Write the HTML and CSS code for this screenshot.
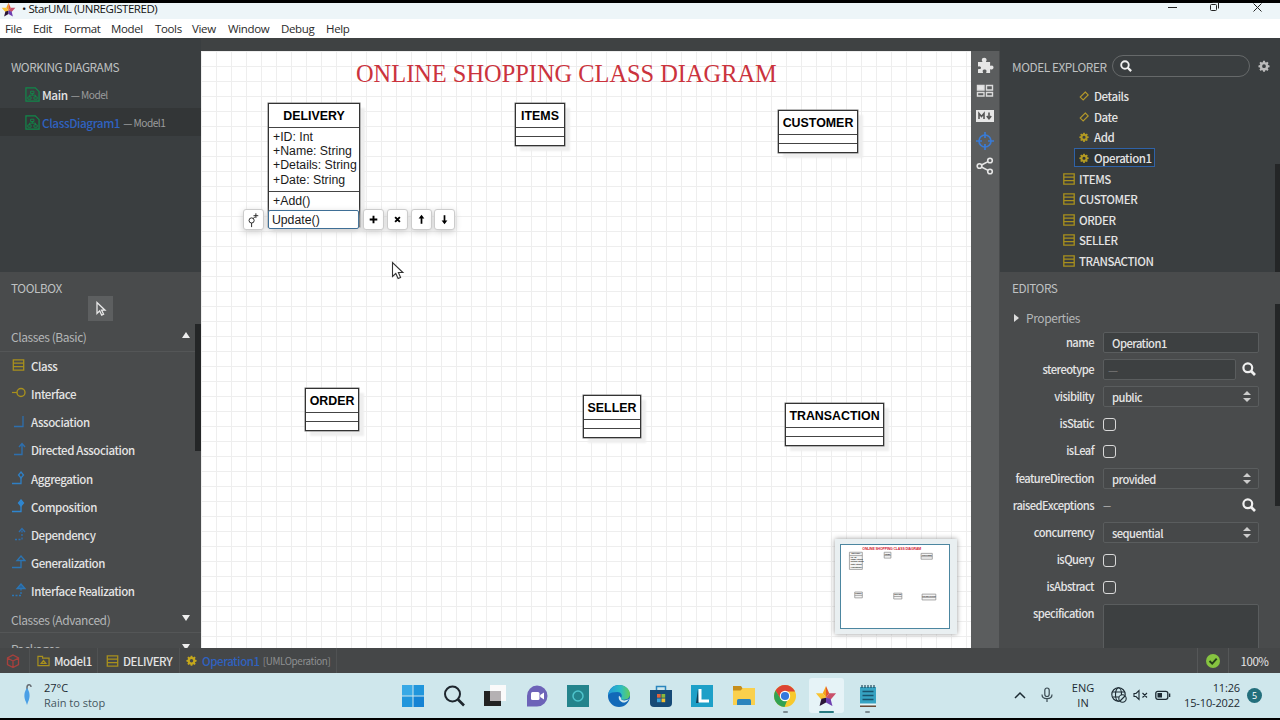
FILE: index.html
```
<!DOCTYPE html>
<html lang="en">
<head>
    <meta charset="UTF-8">
    <meta name="viewport" content="width=device-width, initial-scale=1.0">
    <title>StarUML (UNREGISTERED)</title>
    <link rel="stylesheet" href="styles.css">
</head>
<body>
    <!-- shared icons -->
    <svg class="defs" width="0" height="0">
        <symbol id="i-star" viewBox="0 0 24 24">
            <path fill="#f6a21c" d="M12 1 8.500 9 12 14z"/>
            <path fill="#e2572b" d="M12 1l3.500 8-3.500 5z"/>
            <path fill="#f9c331" d="M1 9h7.500l3.500 5-5 2z"/>
            <path fill="#c9506a" d="M23 9h-7.500L12 14l5 2z"/>
            <path fill="#2a1638" d="M5 23l2-8 5-1v5z"/>
            <path fill="#6d3fb0" d="M19 23l-2-8-5-1v5z"/>
        </symbol>
        <symbol id="i-diagram" viewBox="0 0 16 16">
            <path d="M1 1h10l4 4v10H1z" fill="none" stroke="#11884a" stroke-width="1.3"/>
            <path d="M6 4.500h3.500V7H6zM3 10.500h3.500V13H3zM9.500 10.500H13V13H9.500zM7.800 7v1.700M4.700 10.500V8.700h6.500v1.800" fill="none" stroke="#11884a"/>
        </symbol>
        <symbol id="i-class" viewBox="0 0 12 12">
            <path d="M.8.8h10.400v10.400H.8zM.8 4.200h10.400M.8 7.700h10.400" fill="none" stroke="#a8901d" stroke-width="1.3"/>
        </symbol>
        <symbol id="i-attr" viewBox="0 0 12 12">
            <path d="M7.500 1.200 11 4.700 5 10.800 1.500 7.300z" fill="none" stroke="#b3982a" stroke-width="1.4"/>
        </symbol>
        <symbol id="i-cog" viewBox="0 0 16 16">
            <path fill="currentColor" fill-rule="evenodd" d="M6.800 1h2.400l.4 1.900 1.200.5L12.400 2.300l1.700 1.700-1.100 1.600.5 1.200 1.900.4v2.400l-1.900.4-.5 1.200 1.100 1.600-1.700 1.700-1.600-1.100-1.200.5-.4 1.900H6.800l-.4-1.900-1.200-.5-1.600 1.100-1.700-1.700L3 11.200 2.500 10 .6 9.600V7.200l1.900-.4L3 5.600 1.900 4l1.700-1.700 1.600 1.100 1.200-.5zM8 5.800a2.500 2.500 0 1 0 0 5 2.500 2.500 0 0 0 0-5z"/>
        </symbol>
        <symbol id="i-search" viewBox="0 0 14 14">
            <circle cx="5.800" cy="5.800" r="4.400" fill="none" stroke="currentColor" stroke-width="2.200"/>
            <path d="M8.800 8.800 13 13" stroke="currentColor" stroke-width="2.700"/>
        </symbol>
        <symbol id="i-line" viewBox="0 0 14 14">
            <path d="M2 12.500h9V2" fill="none" stroke="#2d6fae" stroke-width="1.3"/>
        </symbol>
        <symbol id="i-dline" viewBox="0 0 14 14">
            <path d="M2 12.500h8V2M7 5l3-3.500L13 5" fill="none" stroke="#2d6fae" stroke-width="1.4"/>
        </symbol>
    </svg>

    <header class="titlebar">
        <svg class="logo"><use href="#i-star"/></svg>
        <span class="title">• StarUML (UNREGISTERED)</span>
        <svg class="win-btns" width="96" height="14" viewBox="0 0 96 14" fill="none" stroke="#222">
            <path d="M0 6.500h9M85.500 2.500l8 8M93.500 2.500l-8 8"/>
            <rect x="42.500" y="3.500" width="6" height="6" rx="1"/>
            <path d="M44.500 1.500h6v6"/>
        </svg>
    </header>

    <nav class="menu">
        <span class="m1">File</span><span class="m2">Edit</span><span class="m3">Format</span><span class="m4">Model</span><span class="m5">Tools</span><span class="m6">View</span><span class="m7">Window</span><span class="m8">Debug</span><span>Help</span>
    </nav>

    <main class="app">
        <aside class="left">
            <section class="working">
                <h2>WORKING DIAGRAMS</h2>
                <div class="diagram"><svg><use href="#i-diagram"/></svg><b>Main</b><small>— Model</small></div>
                <div class="diagram active"><svg><use href="#i-diagram"/></svg><b>ClassDiagram1</b><small>— Model1</small></div>
            </section>
            <section class="toolbox">
                <h2>TOOLBOX</h2>
                <div class="select-tool">
                    <svg width="12" height="16" viewBox="0 0 12 16"><path d="M2 1.500v11l2.700-2.600 2 4.300 1.900-.9-2-4.100H10z" fill="none" stroke="#e8e8e8" stroke-width="1.3"/></svg>
                </div>
                <div class="group"><span>Classes (Basic)</span><i class="up"></i></div>
                <ul class="tools">
                    <li><svg class="sq"><use href="#i-class"/></svg>Class</li>
                    <li><svg viewBox="0 0 14 14"><path d="M0 6.500h5" stroke="#a8901d" stroke-width="1.200"/><circle cx="9" cy="6.500" r="4" fill="none" stroke="#a8901d" stroke-width="1.400"/></svg>Interface</li>
                    <li><svg><use href="#i-line"/></svg>Association</li>
                    <li><svg><use href="#i-dline"/></svg>Directed Association</li>
                    <li><svg viewBox="0 0 14 14" fill="none" stroke="#2f7fc4" stroke-width="1.300"><path d="M0 12.500h9V7"/><path d="M9 1l2.500 3L9 7 6.500 4z"/></svg>Aggregation</li>
                    <li><svg viewBox="0 0 14 14" fill="none" stroke="#2f86d0" stroke-width="1.300"><path d="M0 12.500h9V7"/><path d="M9 1l2.500 3L9 7 6.500 4z" fill="#2f86d0"/></svg>Composition</li>
                    <li><svg viewBox="0 0 14 14" fill="none" stroke="#2d6fae" stroke-width="1.300"><path d="M3 12.500h7V2" stroke-dasharray="2 1.500"/><path d="M7 5l3-3.500L13 5"/></svg>Dependency</li>
                    <li><svg viewBox="0 0 14 14" fill="none" stroke="#2b75b4" stroke-width="1.300"><path d="M0 12.500h9V5.500"/><path d="M5 5.500h8L9 1z"/></svg>Generalization</li>
                    <li><svg viewBox="0 0 14 14" fill="none" stroke="#2b75b4" stroke-width="1.300"><path d="M0 12.500h9V5.500" stroke-dasharray="2 1.500"/><path d="M5 5.500h8L9 1z" fill="#2b6296"/></svg>Interface Realization</li>
                </ul>
                <div class="group bottom"><span>Classes (Advanced)</span><i class="down"></i></div>
                <div class="group cut"><span>Packages</span><i class="down"></i></div>
                <div class="scroll"></div>
            </section>
        </aside>

        <section class="canvas">
            <div class="heading">ONLINE SHOPPING CLASS DIAGRAM</div>

            <div class="uml delivery">
                <div class="name">DELIVERY</div>
                <div class="attrs">+ID: Int<br>+Name: String<br>+Details: String<br>+Date: String</div>
                <div class="ops">+Add()</div>
            </div>
            <div class="uml items"><div class="name">ITEMS</div><div class="row"></div><div class="row"></div></div>
            <div class="uml customer"><div class="name">CUSTOMER</div><div class="row"></div><div class="row"></div></div>
            <div class="uml order"><div class="name">ORDER</div><div class="row"></div><div class="row"></div></div>
            <div class="uml seller"><div class="name">SELLER</div><div class="row"></div><div class="row"></div></div>
            <div class="uml transaction"><div class="name">TRANSACTION</div><div class="row"></div><div class="row"></div></div>

            <div class="quickedit">
                <button class="qbtn"><svg viewBox="0 0 20 20" fill="none" stroke="#222"><circle cx="8" cy="11" r="2.700"/><path d="M8 13.700V18M12.500 3.500v5M10 6h5M9.800 9l1.500-1.800"/></svg></button>
                <span class="field">Update()</span>
                <button class="qbtn"><svg viewBox="0 0 20 20"><path d="M10 6v8M6 10h8" stroke="#000" stroke-width="2"/></svg></button>
                <button class="qbtn"><svg viewBox="0 0 20 20"><path d="M7.500 7.500l5 5M12.500 7.500l-5 5" stroke="#000" stroke-width="2"/></svg></button>
                <button class="qbtn"><svg viewBox="0 0 20 20"><path d="M10 7v7.500" stroke="#000" stroke-width="1.800"/><path d="M10 5l3 4H7z"/></svg></button>
                <button class="qbtn"><svg viewBox="0 0 20 20"><path d="M10 5.500V13" stroke="#000" stroke-width="1.800"/><path d="M10 15l3-4H7z"/></svg></button>
            </div>

            <svg class="pointer" width="14" height="20" viewBox="0 0 14 20"><path d="M1.500 1.500v14l3.300-3 2.300 5 2.500-1.100-2.200-4.900h4.500z" fill="#fff" stroke="#333" stroke-width="1.100"/></svg>

            <div class="minimap">
                <svg viewBox="0 0 770 595" preserveAspectRatio="none">
                    <text x="362" y="33" text-anchor="middle" textLength="420" font-family="Liberation Sans" font-size="25" font-weight="bold" fill="#d02030">ONLINE SHOPPING CLASS DIAGRAM</text>
                    <g fill="#f4f4f4" stroke="#888" stroke-width="5">
                        <path d="M60 52h92v123H60zM60 76h92M308 52h48v42h-48zM308 76h48M571 60h80v42h-80zM571 84h80M98 337h54v42H98zM98 361h54M376 345h58v42h-58zM376 369h58M578 352h98v42h-98zM578 376h98"/>
                    </g>
                    <g font-family="Liberation Sans" font-size="13" font-weight="bold" fill="#111">
                        <text x="75" y="68">DELIVERY</text>
                        <text x="66" y="92">+ID: Int</text>
                        <text x="66" y="108">+Name: String</text>
                        <text x="66" y="124">+Details: String</text>
                        <text x="66" y="140">+Date: String</text>
                        <text x="66" y="168">+Operation1()</text>
                        <text x="312" y="70">ITEMS</text>
                        <text x="575" y="77">CUSTOMER</text>
                        <text x="100" y="354">ORDER</text>
                        <text x="380" y="362">SELLER</text>
                        <text x="580" y="370">TRANSACTION</text>
                    </g>
                </svg>
            </div>
        </section>

        <div class="strip">
            <svg viewBox="0 0 18 18"><path fill="#e6e6e6" d="M2 5h4.300c.5-.5-.5-1.200-.5-2.100C5.800 1.600 6.800.8 8.200.8s2.400.8 2.400 2.100c0 .9-1 1.600-.5 2.100h4v3.600c.5.600 1 0 1.700 0 1 0 1.700.8 1.700 1.900s-.7 1.900-1.700 1.900c-.7 0-1.200-.6-1.700 0V16h-3.700c-.6-.6.2-1.100.2-1.900 0-.9-.9-1.600-2-1.600s-2 .7-2 1.600c0 .8.800 1.300.2 1.900H2v-3.600c.5-.6 3 .300 3-1.600S2.500 9.500 2 8.900z"/></svg>
            <svg viewBox="0 0 18 18" fill="none" stroke="#dcdcdc" stroke-width="1.400"><path d="M1.500 3.500h6.500v4.500H1.500z" fill="#e6e6e6"/><path d="M10.500 3.500h6v4.500h-6zM1.500 10.500H8V14H1.500zM10.500 10.500h6V14h-6z"/></svg>
            <svg viewBox="0 0 18 18"><path fill="#e6e6e6" d="M0 3h18v12H0z"/><path d="M3 12V6.500l2.500 3 2.500-3V12M13 5.500v5.500M10.800 9l2.200 2.700L15.200 9" fill="none" stroke="#555" stroke-width="1.600"/></svg>
            <svg viewBox="0 0 18 18" fill="none" stroke="#3a7bd5" stroke-width="1.700"><circle cx="9" cy="9" r="6"/><path d="M9 0v6M9 12v6M0 9h6M12 9h6"/></svg>
            <svg viewBox="0 0 18 18" fill="none" stroke="#e6e6e6" stroke-width="1.600"><circle cx="3.500" cy="9" r="2.300"/><circle cx="14" cy="3.500" r="2.300"/><circle cx="14" cy="14.500" r="2.300"/><path d="M5.500 8 12 4.600M5.500 10l6.500 3.400"/></svg>
        </div>

        <aside class="right">
            <section class="explorer">
                <div class="exp-head">
                    <h2>MODEL EXPLORER</h2>
                    <div class="searchbox"><svg><use href="#i-search"/></svg></div>
                    <svg class="cog"><use href="#i-cog"/></svg>
                </div>
                <ul class="tree">
                    <li class="leaf"><span><svg><use href="#i-attr"/></svg>Details</span></li>
                    <li class="leaf"><span><svg><use href="#i-attr"/></svg>Date</span></li>
                    <li class="leaf"><span><svg><use href="#i-cog"/></svg>Add</span></li>
                    <li class="leaf"><span class="sel"><svg><use href="#i-cog"/></svg>Operation1</span></li>
                    <li><span><svg><use href="#i-class"/></svg>ITEMS</span></li>
                    <li><span><svg><use href="#i-class"/></svg>CUSTOMER</span></li>
                    <li><span><svg><use href="#i-class"/></svg>ORDER</span></li>
                    <li><span><svg><use href="#i-class"/></svg>SELLER</span></li>
                    <li><span><svg><use href="#i-class"/></svg>TRANSACTION</span></li>
                </ul>
                <div class="scroll"></div>
            </section>
            <section class="editors">
                <h2>EDITORS</h2>
                <div class="props"><i></i>Properties</div>
                <div class="prop"><label>name</label><div class="input">Operation1</div></div>
                <div class="prop"><label>stereotype</label><div class="input short">—</div><svg><use href="#i-search"/></svg></div>
                <div class="prop"><label>visibility</label><div class="input select">public</div></div>
                <div class="prop"><label>isStatic</label><div class="check"></div></div>
                <div class="prop"><label>isLeaf</label><div class="check"></div></div>
                <div class="prop"><label>featureDirection</label><div class="input select">provided</div></div>
                <div class="prop"><label>raisedExceptions</label><div class="none">—</div><svg><use href="#i-search"/></svg></div>
                <div class="prop"><label>concurrency</label><div class="input select">sequential</div></div>
                <div class="prop"><label>isQuery</label><div class="check"></div></div>
                <div class="prop"><label>isAbstract</label><div class="check"></div></div>
                <div class="prop spec"><label>specification</label><div class="input area"></div></div>
                <div class="scroll"></div>
            </section>
        </aside>
    </main>

    <footer class="status">
        <div class="crumb cube"><svg viewBox="0 0 14 14" fill="none" stroke="#a8403c" stroke-width="1.300"><path d="M7 1l5.500 3v6.500L7 13.500l-5.500-3V4zM1.500 4 7 7l5.500-3M7 7v6.500"/></svg></div>
        <div class="crumb model"><svg viewBox="0 0 14 12" fill="none" stroke="#a8901d" stroke-width="1.300"><path d="M1 11V1h5v2h7v8zM4.500 8.500h5L7 5.500z"/></svg>Model1</div>
        <div class="crumb del"><svg><use href="#i-class"/></svg>DELIVERY</div>
        <div class="crumb op"><svg><use href="#i-cog"/></svg><span>Operation1</span><small>[UMLOperation]</small></div>
        <div class="valid"><svg width="14" height="14" viewBox="0 0 14 14"><circle cx="7" cy="7" r="7" fill="#86c440"/><path d="M3.500 7l2.700 2.700 4.500-5" fill="none" stroke="#26401a" stroke-width="1.900"/></svg></div>
        <div class="zoom">100%</div>
    </footer>

    <footer class="taskbar">
        <div class="weather">
            <svg width="10" height="24" viewBox="0 0 10 24"><path d="M5 7V4.500C5 .8 9 .8 9 4" fill="none" stroke="#666c72" stroke-width="1.500"/><path d="M5 5c3 4 3.500 9 1 14l-1 3-1-3C1.500 14 2 9 5 5z" fill="#4a9fe6"/></svg>
            <div>27°C<br><span>Rain to stop</span></div>
        </div>
        <div class="apps">
            <div class="app-icon"><svg viewBox="0 0 22 22" fill="#1583d4"><path d="M0 0h10.500v10.500H0z" fill="#38a9e6"/><path d="M11.500 0H22v10.500H11.500zM0 11.500h10.500V22H0z" fill="#2196dc"/><path d="M11.500 11.500H22V22H11.500z"/></svg></div>
            <div class="app-icon"><svg viewBox="0 0 22 22" fill="none" stroke="#1e262e"><circle cx="9.500" cy="9" r="7.500" stroke-width="2"/><path d="M15 14.500l6 6" stroke-width="2.600"/></svg></div>
            <div class="app-icon"><svg viewBox="0 0 22 22"><path fill="#fafafa" d="M6 0h16v16H6z"/><path fill="#222" d="M0 6h17v15H0z"/><path fill="#b5b1b3" d="M6 6h11v10H6z"/></svg></div>
            <div class="app-icon"><svg viewBox="0 0 22 22"><path fill="#6d63b8" d="M11 .5a10.500 10.500 0 1 1 0 21H1V11A10.300 10.300 0 0 1 11 .5z"/><rect x="5" y="7" width="8.500" height="8" rx="1.500" fill="#fff"/><path d="M14.200 10 18 7.500v7L14.200 12z" fill="#fff"/></svg></div>
            <div class="app-icon"><svg viewBox="0 0 22 22"><path fill="#24848c" d="M0 0h22v22H0z"/><circle cx="11" cy="11" r="5" fill="none" stroke="#4fc4cc" stroke-width="1.500"/></svg></div>
            <div class="app-icon"><svg viewBox="0 0 22 22">
                <defs><linearGradient id="edge" x2="1"><stop offset="0" stop-color="#2399dc"/><stop offset=".6" stop-color="#2dbec0"/><stop offset="1" stop-color="#66cc55"/></linearGradient></defs>
                <circle cx="11" cy="11" r="11" fill="#1269b8"/><path fill="url(#edge)" d="M0 10C1 4 5.500 0 11 0c6.500 0 11 4.500 11 9 0 4-3 5.700-6 5.700-2 0-3.500-.7-3-1.800 2-2.500 0-6-3.500-6C5.500 6.900 2 7.500 0 10z"/><path fill="#d2e8ec" d="M13 12.900c-.5 1.500 1.500 2.700 3.800 2.500 2-.1 3.500-.8 4.500-1.800-1 2-2.500 3.300-4.300 3.900-4 .5-7.300-3-6-6.800.8.500 1.600 1.200 2 2.200z"/></svg></div>
            <div class="app-icon"><svg viewBox="0 0 22 22"><path d="M6.500 5V1.500h9V5" fill="none" stroke="#2b86bd" stroke-width="1.500"/><path fill="#174a76" d="M0 5h22v13a4 4 0 0 1-4 4H4a4 4 0 0 1-4-4z"/><path fill="#e2643c" d="M7 9h3.700v3.700H7z"/><path fill="#8ab83c" d="M11.500 9h3.700v3.700h-3.700z"/><path fill="#3aa0d6" d="M7 13.500h3.700v3.700H7z"/><path fill="#f0bd32" d="M11.500 13.500h3.700v3.700h-3.700z"/></svg></div>
            <div class="app-icon"><svg viewBox="0 0 22 22"><path fill="#1da0c8" d="M0 0h22v22H0z"/><path fill="#123c54" d="M7 4 5 18h3z"/><path fill="#fff" d="M7.500 4h3v10.500h7.500v3H7.500z"/></svg></div>
            <div class="app-icon"><svg viewBox="0 0 22 22"><path fill="#c78e1a" d="M0 1h8l2 3v4H0z"/><path fill="#fad04c" d="M0 5.500h7.500L10 3h12v17H0z"/><path fill="#2c84bd" d="M4 20v-4.500q0-1.500 1.500-1.500h11q1.500 0 1.500 1.500V20z"/></svg></div>
            <div class="app-icon run"><svg viewBox="0 0 22 22"><circle cx="11" cy="11" r="11" fill="#f8c92c"/><path fill="#dc4434" d="M1.500 5.500a11 11 0 0 1 19 0L21 6.500H11L6.200 13.500z"/><path fill="#32a252" d="M1.500 5.500 6.500 13.500l6.500 2.300L10.500 22A11 11 0 0 1 1.500 5.500z"/><circle cx="11" cy="11" r="5.200" fill="#fff"/><circle cx="11" cy="11" r="4.100" fill="#3478dc"/></svg></div>
            <div class="app-icon run current"><svg><use href="#i-star"/></svg></div>
            <div class="app-icon run"><svg viewBox="0 0 22 22"><path fill="#36a3c2" d="M3 2h16v18H3z"/><path d="M5 0v3M8 0v3M11 0v3M14 0v3M17 0v3" stroke="#234b5c" stroke-width="1.200"/><path d="M5.500 6.500h11M5.500 10.500h11M5.500 14.500h11" stroke="#18546e" stroke-width="1.300"/><path d="M3 18.500h16v1.500H3z" fill="#e8f4f6"/><path d="M3 20.500h16V22H3z" fill="#6b4a35"/></svg></div>
        </div>
        <div class="tray">
            <svg class="t-up" width="12" height="8" viewBox="0 0 12 8"><path d="M1 7l5-5 5 5" fill="none" stroke="#1d2b33" stroke-width="1.500"/></svg>
            <svg class="t-mic" width="12" height="16" viewBox="0 0 12 16" fill="none" stroke="#3a4a52" stroke-width="1.200"><rect x="3.800" y="1" width="4.400" height="8.500" rx="2.200"/><path d="M1 7.500c0 5.500 10 5.500 10 0M6 11.500V15"/></svg>
            <div class="lang">ENG<br>IN</div>
            <svg class="t-net" width="16" height="16" viewBox="0 0 16 16" fill="none" stroke="#1d2b33" stroke-width="1.100"><circle cx="7.500" cy="7.500" r="6.700"/><ellipse cx="7.500" cy="7.500" rx="3" ry="6.700"/><path d="M1.500 5h12M1.500 10h7"/><circle cx="11.500" cy="11.500" r="3.700" fill="#cde6ea"/><path d="M9 14l5-5"/></svg>
            <svg class="t-vol" width="15" height="12" viewBox="0 0 15 12" fill="none" stroke="#1d2b33" stroke-width="1.100"><path d="M1 4.500h2L6 1.500v9L3 7.500H1zM9.500 4l4.500 4.500M14 4 9.500 8.500"/></svg>
            <svg class="t-bat" width="16" height="11" viewBox="0 0 16 11"><rect x=".8" y="1.300" width="12" height="8" rx="2" fill="none" stroke="#1d2b33" stroke-width="1.300"/><path d="M2.500 3h4.500v4.600H2.500zM14 3.500h1.300v3.600H14z" fill="#1d2b33"/></svg>
            <div class="clock">11:26<br>15-10-2022</div>
            <div class="badge">5</div>
        </div>
    </footer>
</body>
</html>
```

FILE: styles.css
```
* {
    box-sizing: border-box;
}
body {
    margin: 0;
    width: 1280px;
    height: 720px;
    overflow: hidden;
    background: #000;
    padding-top: 3px;
    display: flex;
    flex-direction: column;
    font-family: "Noto Sans CJK SC", "Open Sans", sans-serif;
    font-size: 12px;
    letter-spacing: -0.420px;
    color: #e4e4e4;
}
.defs {
    display: none;
}
svg {
    flex: none;
}
h2 {
    margin: 0;
    font-size: 11.800px;
    font-weight: 400;
    color: #bfc1c2;
    line-height: 18px;
}
ul {
    list-style: none;
    margin: 0;
    padding: 0;
}

/* title + menu */
.titlebar {
    height: 16px;
    flex: none;
    background: #edf5f8;
    color: #111;
    display: flex;
    align-items: center;
    font-family: "Open Sans", sans-serif;
    font-size: 11.5px;
    letter-spacing: -0.460px;
}
.logo {
    width: 15px;
    height: 15px;
    margin-left: 1px;
    margin-top: -4px;
}
.title {
    margin-left: 6px;
    line-height: 14px;
    margin-top: -5px;
}
.win-btns {
    margin-left: auto;
    margin-right: 16px;
    margin-top: -7px;
}
.menu {
    height: 19px;
    flex: none;
    background: #fff;
    color: #2a2a2a;
    display: flex;
    align-items: center;
    padding-left: 5px;
    padding-bottom: 1px;
    font-family: "Open Sans", sans-serif;
    font-size: 11.5px;
    letter-spacing: -0.350px;
}
.m1 { width: 28px; }
.m2 { width: 31px; }
.m3 { width: 47px; }
.m4 { width: 44px; }
.m5 { width: 37px; }
.m6 { width: 36px; }
.m7 { width: 53px; }
.m8 { width: 45px; }

/* main area */
.app {
    height: 610px;
    flex: none;
    background: #3f4243;
    display: flex;
}
.left {
    width: 201px;
    display: flex;
    flex-direction: column;
}
.working {
    height: 234px;
    background: #3a3e40;
    padding-top: 20px;
}
.working h2 {
    padding-left: 11px;
    margin-bottom: 4px;
}
.diagram {
    height: 28px;
    display: flex;
    align-items: center;
    padding-left: 25px;
}
.diagram svg {
    width: 15px;
    height: 15px;
}
.diagram b {
    font-weight: 500;
    font-size: 11.800px;
    margin: 0 3px 0 2px;
}
.diagram small {
    font-size: 10.200px;
    letter-spacing: -0.500px;
    color: #9a9c9d;
    letter-spacing: -0.600px;
}
.diagram small {
    letter-spacing: -0.520px;
}
.active {
    background: #333637;
}
.active b {
    color: #2f62c0;
}
.toolbox {
    height: 376px;
    background: #494b4c;
    position: relative;
    overflow: hidden;
    padding-top: 7px;
}
.toolbox h2 {
    padding-left: 11px;
}
.select-tool {
    width: 25px;
    height: 25px;
    margin: -1px 0 0 88px;
    padding-left: 1px;
    background: #5d5f60;
    display: flex;
    align-items: center;
    justify-content: center;
}
.group {
    height: 31px;
    padding: 1px 11px 0 11px;
    display: flex;
    align-items: center;
    justify-content: space-between;
    color: #b4b6b7;
    border-bottom: 1px solid #545657;
}
.group i {
    border: 4px solid transparent;
    margin-top: -3px;
}
.group i.up {
    border-bottom: 6px solid #eee;
    border-top: 0;
}
.group i.down {
    border-top: 6px solid #eee;
    border-bottom: 0;
}
.group.bottom {
    height: 28px;
}
.group.cut {
    height: 28px;
    padding-top: 4px;
}
.tools li {
    height: 28.150px;
    display: flex;
    align-items: center;
    padding-left: 12px;
    font-weight: 500;
    font-size: 11.500px;
}
.tools svg {
    width: 14px;
    height: 14px;
    margin-right: 5px;
    margin-top: -2px;
}
.tools svg.sq {
    width: 13px;
    height: 12px;
    margin-right: 6px;
}
.scroll {
    position: absolute;
    background: #242627;
    width: 5px;
    right: 0;
}
.toolbox .scroll {
    top: 52px;
    height: 127px;
    width: 6px;
}

/* drawing canvas */
.canvas {
    width: 770px;
    height: 597px;
    margin-top: 13px;
    position: relative;
    overflow: hidden;
    background-color: #fff;
    background-image: linear-gradient(#eeeeee 1px, transparent 1px), linear-gradient(90deg, #eeeeee 1px, transparent 1px);
    background-size: 15px 15px;
    font-family: "Liberation Sans", sans-serif;
    letter-spacing: 0;
    color: #1a1a1a;
}
.heading {
    position: absolute;
    left: 155px;
    top: 8px;
    font-family: "Liberation Serif", serif;
    font-size: 24.400px;
    line-height: 30px;
    color: #cb333d;
    white-space: nowrap;
}
.uml {
    position: absolute;
    background: #fff;
    border: 1px solid #333;
    box-shadow: 0 0 0 0.500px #777, 5px 5px 2px #eeeeee;
    font-size: 12.300px;
    line-height: 14.200px;
    height: 43px;
}
.uml .name {
    height: 23px;
    line-height: 24px;
    text-align: center;
    font-weight: bold;
    font-size: 12.400px;
    color: #000;
}
.uml .row {
    height: 9px;
    border-top: 1px solid #444;
}
.uml .attrs {
    height: 64px;
    border-top: 1px solid #444;
    padding: 2px 0 0 4px;
    white-space: nowrap;
}
.uml .ops {
    border-top: 1px solid #444;
    padding: 2px 0 0 4px;
}
.delivery { left: 67px; top: 52px; width: 92px; height: 124px; }
.items { left: 314px; top: 52px; width: 50px; }
.customer { left: 577px; top: 59px; width: 80px; }
.order { left: 104px; top: 337px; width: 54px; }
.seller { left: 382px; top: 344px; width: 58px; }
.transaction { left: 584px; top: 352px; width: 99px; }
.quickedit {
    position: absolute;
    left: 42px;
    top: 158px;
    display: flex;
    align-items: center;
    gap: 2.900px;
}
.qbtn {
    width: 21px;
    height: 21px;
    padding: 0;
    background: #fff;
    border: 1px solid #ccc;
    border-radius: 3px;
    box-shadow: 0 2px 6px #ccc;
}
.qbtn svg {
    display: block;
    width: 19px;
    height: 19px;
}
.field {
    width: 91px;
    height: 19px;
    margin: 0 1px 0 1px;
    background: #fff;
    border: 1px solid #3f6f96;
    border-radius: 2px;
    font-size: 12.300px;
    line-height: 18px;
    padding-left: 3px;
    box-shadow: 0 2px 6px #ccc;
}
.pointer {
    position: absolute;
    left: 190px;
    top: 210px;
}
.minimap {
    position: absolute;
    left: 634px;
    top: 488px;
    width: 122px;
    height: 95px;
    background: #e9eff1;
    padding: 5px 7px 5px 5px;
    box-shadow: 0 0 5px #999;
}
.minimap svg {
    display: block;
    width: 110px;
    height: 85px;
    background: #fff;
    border: 1px solid #4c86a0;
}

.strip {
    width: 29px;
    background: #5b5d5e;
    margin-top: 13px;
    padding-top: 6px;
    display: flex;
    flex-direction: column;
    align-items: center;
    gap: 7px;
    border-right: 1px solid #4a4c4d;
}
.strip svg {
    width: 18px;
    height: 18px;
}

/* right side */
.right {
    width: 280px;
}
.explorer {
    height: 234px;
    background: #3a3e40;
    position: relative;
}
.exp-head {
    height: 48px;
    padding: 17px 10px 0 12px;
    display: flex;
    align-items: flex-start;
}
.exp-head h2 {
    width: 100px;
    white-space: nowrap;
    margin-top: 3px;
}
.searchbox {
    width: 138px;
    height: 22px;
    border: 1px solid #66696a;
    border-radius: 11px;
    padding: 4px 7px;
}
.searchbox svg {
    display: block;
    width: 12px;
    height: 12px;
    color: #f0f0f0;
}
.cog {
    width: 12px;
    height: 12px;
    margin: 5px 0 0 8px;
    color: #bbb;
}
.tree li {
    height: 20.570px;
    padding-left: 62px;
    display: flex;
    align-items: center;
    font-weight: 500;
    font-size: 11.500px;
}
.tree span {
    display: flex;
    align-items: center;
    height: 19px;
    border: 1px solid transparent;
}
.tree svg {
    width: 12px;
    height: 12px;
    margin-right: 4px;
    color: #b39a22;
}
.tree .leaf {
    padding-left: 74px;
}
.tree .leaf svg {
    width: 10px;
    height: 10px;
    margin: 0 5px 0 4px;
}
.tree .sel {
    background: #2d3335;
    border-color: #2f62a8;
    padding-right: 2px;
}
.explorer .scroll {
    top: 126px;
    height: 108px;
}
.editors {
    height: 376px;
    background: #494b4c;
    position: relative;
    overflow: hidden;
    padding-top: 8px;
}
.editors h2 {
    padding-left: 12px;
    height: 26px;
    margin-top: -1px;
    margin-bottom: 1px;
}
.props {
    height: 22px;
    display: flex;
    align-items: center;
    color: #b4b6b7;
    padding: 1px 0 0 14px;
}
.props i {
    border: 4px solid transparent;
    border-left: 5px solid #ddd;
    border-right: 0;
    margin-right: 7px;
}
.prop {
    height: 27.200px;
    display: flex;
    align-items: center;
    font-weight: 500;
    font-size: 11.200px;
    letter-spacing: -0.550px;
    padding-top: 2px;
}
.prop label {
    width: 95px;
    text-align: right;
    margin-right: 8px;
    margin-top: -2px;
    padding-right: 1px;
}
.input {
    width: 156px;
    height: 21px;
    background: #3d4041;
    border: 1px solid #5a5d5e;
    border-radius: 2px;
    padding-left: 8px;
    line-height: 20px;
    position: relative;
}
.short {
    width: 133px;
    padding-left: 4px;
    color: #777;
}
.select {
    background: #464849;
}
.select::before,
.select::after {
    content: "";
    position: absolute;
    right: 7px;
    border: 4px solid transparent;
}
.select::before {
    top: 4px;
    border-bottom: 4px solid #ccc;
    border-top: 0;
}
.select::after {
    top: 11px;
    border-top: 4px solid #ccc;
    border-bottom: 0;
}
.check {
    width: 13px;
    height: 13px;
    border: 1.500px solid #d8d8d8;
    border-radius: 3px;
}
.none {
    width: 133px;
    color: #bbb;
    font-size: 9px;
}
.prop svg {
    width: 14px;
    height: 14px;
    margin-left: 6px;
    margin-top: -1px;
    color: #f0f0f0;
}
.spec {
    height: 60px;
    align-items: flex-start;
}
.spec label {
    margin-top: 3px;
}
.area {
    height: 60px;
    margin-top: 2px;
}
.editors .scroll {
    top: 32px;
    height: 202px;
}

/* status bar */
.status {
    height: 25px;
    flex: none;
    background: #454748;
    display: flex;
    align-items: center;
    font-weight: 500;
    font-size: 11.500px;
}
.crumb {
    height: 25px;
    display: flex;
    align-items: center;
    border-right: 1px solid #505253;
}
.crumb svg {
    width: 13px;
    height: 12px;
    margin-right: 4px;
}
.cube {
    width: 30px;
    padding-left: 6px;
}
.crumb.cube svg {
    width: 14px;
    height: 14px;
}
.model {
    width: 68px;
    padding-left: 7px;
}
.del {
    width: 82px;
    padding-left: 8px;
}
.op {
    width: 157px;
    padding-left: 6px;
}
.op svg {
    width: 11px;
    height: 11px;
    color: #c4a71c;
    margin: 0 5px 0 0;
}
.op span {
    color: #2f62c0;
}
.op small {
    color: #8e9091;
    font-size: 9.800px;
    font-weight: 400;
    margin-left: 3px;
    letter-spacing: -0.350px;
}
.valid {
    margin-left: auto;
    width: 32px;
    height: 25px;
    border-left: 1px solid #555758;
    border-right: 1px solid #555758;
    display: flex;
    align-items: center;
    justify-content: center;
}
.zoom {
    width: 51px;
    text-align: center;
    font-weight: 400;
    font-size: 11.500px;
}

/* windows taskbar */
.taskbar {
    height: 45px;
    flex: none;
    background: #cfe7ec;
    color: #1d2b33;
    display: flex;
    align-items: center;
    font-family: "Open Sans", sans-serif;
    font-size: 11px;
    line-height: 15px;
    letter-spacing: 0;
}
.weather {
    width: 395px;
    display: flex;
    align-items: center;
    gap: 12px;
    padding-left: 22px;
    padding-bottom: 2px;
}
.weather span {
    color: #45565e;
}
.apps {
    display: flex;
    gap: 6.400px;
}
.app-icon {
    width: 35px;
    height: 35px;
    display: flex;
    align-items: center;
    justify-content: center;
    position: relative;
}
.app-icon svg {
    width: 22px;
    height: 22px;
}
.current {
    background: #e6f3f7;
    border-radius: 3px;
}
.run::after {
    content: "";
    position: absolute;
    bottom: 0;
    left: 15px;
    width: 5px;
    height: 2px;
    border-radius: 1px;
    background: #7d8b91;
}
.current::after {
    left: 10px;
    width: 15px;
    background: #287a80;
}
.tray {
    margin-left: auto;
    display: flex;
    align-items: center;
    padding-right: 18px;
    padding-bottom: 1px;
}
.t-mic {
    margin: 0 15px 0 15px;
}
.lang {
    width: 30px;
    text-align: center;
    margin-right: 13px;
}
.t-vol {
    margin: 0 7px 0 6px;
}
.clock {
    width: 69px;
    text-align: right;
    white-space: nowrap;
    margin-right: 7px;
    letter-spacing: -0.150px;
}
.badge {
    width: 15px;
    height: 15px;
    border-radius: 50%;
    background: #236f7c;
    color: #fff;
    font-size: 9px;
    text-align: center;
}
```
